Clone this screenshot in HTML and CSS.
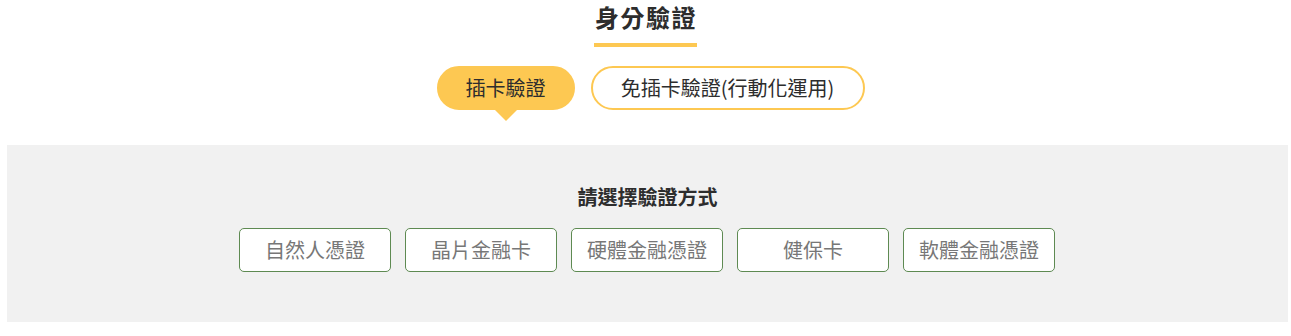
FILE: index.html
```html
<!DOCTYPE html>
<html lang="zh-Hant">
<head>
<meta charset="utf-8">
<title>身分驗證</title>
<link rel="stylesheet" href="styles.css">
</head>
<body>
<div class="page">
  <div class="head">
    <h1 class="title">身分驗證</h1>
  </div>
  <div class="tabs">
    <button class="tab active">插卡驗證</button>
    <button class="tab">免插卡驗證(行動化運用)</button>
  </div>
  <section class="panel">
    <h2 class="panel-title">請選擇驗證方式</h2>
    <div class="options">
      <button class="opt">自然人憑證</button>
      <button class="opt">晶片金融卡</button>
      <button class="opt">硬體金融憑證</button>
      <button class="opt">健保卡</button>
      <button class="opt">軟體金融憑證</button>
    </div>
  </section>
</div>
</body>
</html>
```

FILE: styles.css
```css
* { box-sizing: border-box; }
html, body { margin: 0; padding: 0; background: #fff; }
body {
  font-family: "Noto Sans CJK TC", "Noto Sans", sans-serif;
  color: #333;
}
.page { width: 1291px; }
.head { display: flex; justify-content: center; }
.title {
  margin: 0;
  font-size: 24px;
  font-weight: 700;
  line-height: 34px;
  padding-bottom: 9px;
  border-bottom: 4px solid #fdc852;
  color: #2d2d2d;
  letter-spacing: 1.5px;
  padding-left: 1px;
}
.tabs {
  display: flex;
  justify-content: center;
  gap: 16px;
  margin-top: 19px;
  padding-left: 10px;
}
.tab {
  position: relative;
  font-family: inherit;
  font-size: 20px;
  line-height: 40px;
  height: 44px;
  width: 274px;
  padding: 0;
  border: 2px solid #fdc852;
  border-radius: 22px;
  background: #fff;
  color: #2d2d2d;
  cursor: pointer;
}
.tab.active {
  background: #fdc852;
  width: 138px;
}
.tab.active::after {
  content: "";
  position: absolute;
  left: 50%;
  bottom: -13px;
  margin-left: -11px;
  border-left: 11px solid transparent;
  border-right: 11px solid transparent;
  border-top: 11px solid #fdc852;
}
.panel {
  margin: 35px 3px 0 7px;
  background: #f1f1f1;
  padding: 37px 0 50px;
  display: flex;
  flex-direction: column;
  align-items: center;
  gap: 16px;
}
.panel-title {
  margin: 0;
  font-size: 20px;
  font-weight: 700;
  line-height: 30px;
  color: #2d2d2d;
}
.options { display: flex; gap: 14px; padding-right: 1px; }
.opt {
  width: 152px;
  height: 44px;
  font-family: inherit;
  font-size: 20px;
  line-height: 42px;
  padding: 0;
  color: #777;
  background: #fff;
  border: 1px solid #5e8a52;
  border-radius: 5px;
  cursor: pointer;
}
```
